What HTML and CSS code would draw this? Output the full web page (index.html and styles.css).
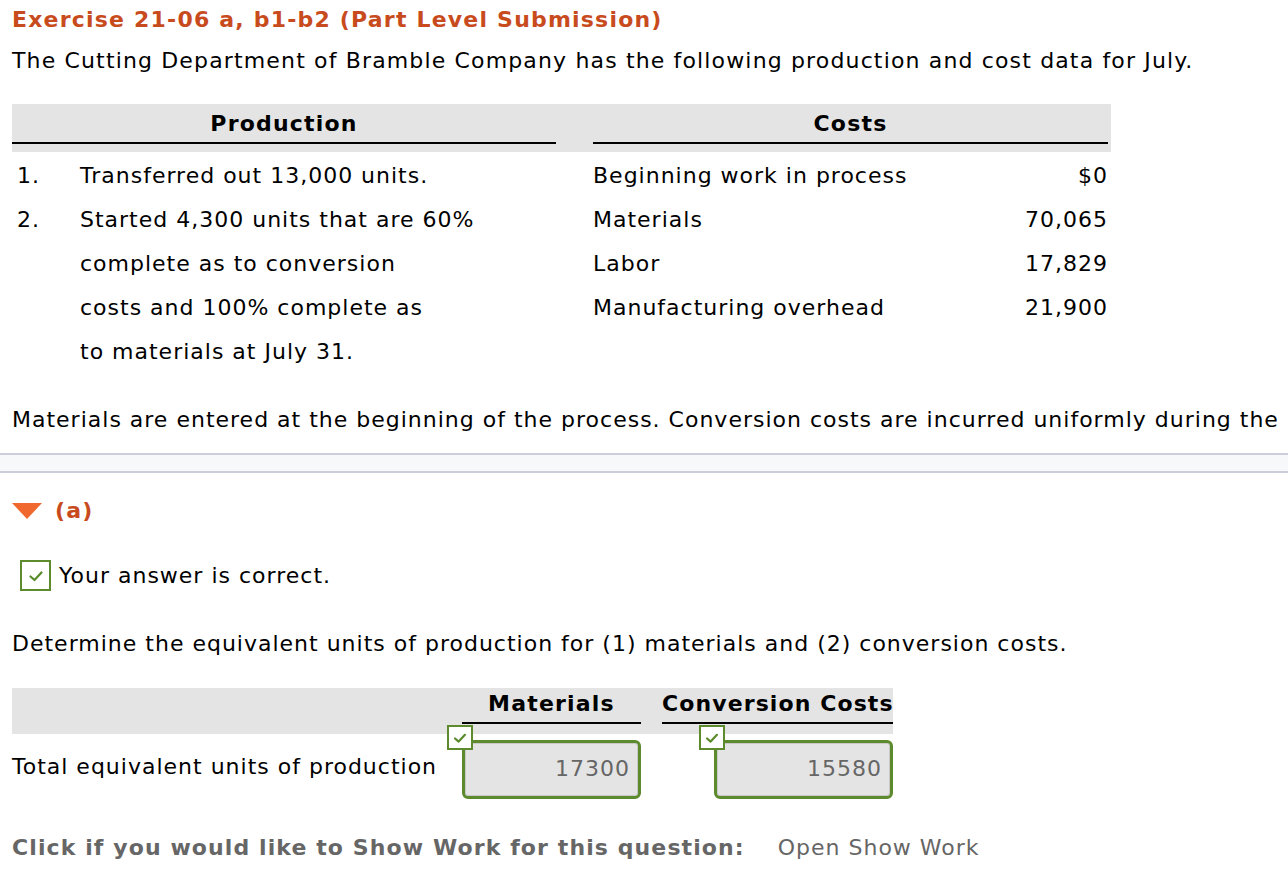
FILE: index.html
```html
<!DOCTYPE html>
<html>
<head>
<meta charset="utf-8">
<link rel="stylesheet" href="styles.css">
</head>
<body>
<div class="page">
  <h1 class="title">Exercise 21-06 a, b1-b2 (Part Level Submission)</h1>
  <p class="intro">The Cutting Department of Bramble Company has the following production and cost data for July.</p>

  <table class="data">
    <colgroup>
      <col class="c-num"><col class="c-text"><col class="c-gap"><col class="c-label"><col class="c-amt"><col class="c-pad">
    </colgroup>
    <tr class="head">
      <th colspan="2"><div class="hd">Production</div></th>
      <th></th>
      <th colspan="2"><div class="hd">Costs</div></th>
      <th></th>
    </tr>
    <tr><td class="num">1.</td><td>Transferred out 13,000 units.</td><td></td><td>Beginning work in process</td><td class="amt">$0</td><td></td></tr>
    <tr><td class="num">2.</td><td>Started 4,300 units that are 60%</td><td></td><td>Materials</td><td class="amt">70,065</td><td></td></tr>
    <tr><td></td><td>complete as to conversion</td><td></td><td>Labor</td><td class="amt">17,829</td><td></td></tr>
    <tr><td></td><td>costs and 100% complete as</td><td></td><td>Manufacturing overhead</td><td class="amt">21,900</td><td></td></tr>
    <tr><td></td><td>to materials at July 31.</td><td></td><td></td><td></td><td></td></tr>
  </table>

  <p class="note">Materials are entered at the beginning of the process. Conversion costs are incurred uniformly during the process.</p>
</div>

<div class="band"></div>

<div class="page">
  <div class="part">
    <span class="tri"></span>
    <span class="part-label">(a)</span>
  </div>

  <div class="correct">
    <span class="chk big"><svg viewBox="0 0 20 20" width="20" height="20"><path d="M4.5 10.5 L8.5 14 L15.5 6.5" fill="none" stroke="#5a8a2a" stroke-width="2.2" stroke-linecap="round" stroke-linejoin="round"/></svg></span>
    <span>Your answer is correct.</span>
  </div>

  <p class="question">Determine the equivalent units of production for (1) materials and (2) conversion costs.</p>

  <table class="ans">
    <colgroup><col class="a-label"><col class="a-mat"><col class="a-gap"><col class="a-conv"></colgroup>
    <tr class="head">
      <th></th>
      <th><div class="hd">Materials</div></th>
      <th></th>
      <th><div class="hd">Conversion Costs</div></th>
    </tr>
    <tr class="row">
      <td class="lbl">Total equivalent units of production</td>
      <td><div class="field"><span class="chk small"><svg viewBox="0 0 20 20" width="18" height="18"><path d="M4.5 10.5 L8.5 14 L15.5 6.5" fill="none" stroke="#5a8a2a" stroke-width="2.4" stroke-linecap="round" stroke-linejoin="round"/></svg></span><div class="input">17300</div></div></td>
      <td></td>
      <td><div class="field"><span class="chk small"><svg viewBox="0 0 20 20" width="18" height="18"><path d="M4.5 10.5 L8.5 14 L15.5 6.5" fill="none" stroke="#5a8a2a" stroke-width="2.4" stroke-linecap="round" stroke-linejoin="round"/></svg></span><div class="input">15580</div></div></td>
    </tr>
  </table>

  <div class="showwork">
    <span class="sw-q">Click if you would like to Show Work for this question:</span>
    <span class="sw-link">Open Show Work</span>
  </div>
</div>
</body>
</html>
```
FILE: styles.css
```css
html, body {
  margin: 0;
  padding: 0;
  background: #fff;
  overflow: hidden;
}
body {
  font-family: "DejaVu Sans", Verdana, sans-serif;
  font-size: 22px;
  letter-spacing: 1px;
  color: #000;
  width: 1288px;
}
th, .title, .part-label {
  letter-spacing: 1.2px;
}
.page {
  padding-left: 12px;
  overflow: hidden;
}
.title {
  margin: 6px 0 0 0;
  font-size: 22px;
  line-height: 28px;
  font-weight: bold;
  color: #c84b1e;
}
.intro {
  margin: 13px 0 0 0;
  line-height: 28px;
  letter-spacing: 1.15px;
}
.data {
  margin-top: 29px;
  border-collapse: collapse;
  width: 1099px;
  table-layout: fixed;
}
.c-num { width: 68px; }
.c-text { width: 476px; }
.c-gap { width: 37px; }
.c-label { width: 330px; }
.c-amt { width: 185px; }
.c-pad { width: 3px; }
.data td, .data th {
  padding: 0;
}
.head {
  background: #e4e4e4;
}
.data .head th {
  padding: 6px 0 8px 0;
  font-weight: bold;
}
.hd {
  line-height: 27px;
  padding-bottom: 5px;
  border-bottom: 2px solid #000;
  text-align: center;
  white-space: nowrap;
}
.data td {
  height: 41px;
  padding-top: 3px;
  line-height: 41px;
  white-space: nowrap;
  vertical-align: top;
}
.data td.num {
  padding-left: 5px;
}
.data td.amt {
  text-align: right;
}
.note {
  margin: 34px 0 0 0;
  line-height: 28px;
  white-space: nowrap;
}
.band {
  margin-top: 19px;
  height: 16px;
  background: #f7f8fa;
  border-top: 2px solid #cbced9;
  border-bottom: 2px solid #cbced9;
}
.part {
  display: flex;
  align-items: center;
  margin-top: 23px;
  height: 28px;
}
.tri {
  width: 0;
  height: 0;
  border-left: 15px solid transparent;
  border-right: 15px solid transparent;
  border-top: 16px solid #f0682d;
  margin-top: 2px;
}
.part-label {
  margin-left: 13px;
  font-weight: bold;
  color: #c84b1e;
}
.correct {
  display: flex;
  align-items: center;
  margin-top: 36px;
  margin-left: 8px;
  gap: 8px;
}
.chk {
  display: flex;
  align-items: center;
  justify-content: center;
  box-sizing: border-box;
  border: 2px solid #5e8a2e;
  background: #fff;
}
.chk.big {
  width: 31px;
  height: 31px;
}
.question {
  margin: 39px 0 0 0;
  line-height: 28px;
}
.ans {
  margin-top: 30px;
  border-collapse: collapse;
  table-layout: fixed;
  width: 881px;
}
.a-label { width: 450px; }
.a-mat { width: 179px; }
.a-gap { width: 21px; }
.a-conv { width: 231px; }
.ans td, .ans th { padding: 0; }
.ans .head th {
  padding: 2px 0 10px 0;
  font-weight: bold;
}
.ans .hd {
  line-height: 27px;
  padding-bottom: 5px;
}
.ans th:last-child .hd {
  letter-spacing: 1.1px;
}
.ans .row td {
  vertical-align: top;
}
.lbl {
  padding-top: 19px !important;
  line-height: 28px;
  white-space: nowrap;
}
.field {
  position: relative;
  padding-top: 6px;
  display: flex;
  justify-content: flex-start;
}
.ans .row td:last-child .field {
  padding-left: 52px;
}
.chk.small {
  position: absolute;
  top: -9px;
  left: -15px;
  width: 26px;
  height: 25px;
}
.ans .row td:last-child .chk.small {
  left: 37px;
}
.input {
  box-sizing: border-box;
  width: 179px;
  height: 59px;
  border: 3px solid #5e8a2e;
  border-radius: 6px;
  background: #e4e4e4;
  box-shadow: inset 0 0 0 1px #c9c9c9;
  color: #666;
  text-align: right;
  padding-right: 8px;
  line-height: 50px;
  padding-top: 1px;
}
.showwork {
  margin-top: 35px;
  display: flex;
  gap: 33px;
  color: #666;
  line-height: 28px;
}
.sw-q {
  font-weight: bold;
  letter-spacing: 1.1px;
}
```
